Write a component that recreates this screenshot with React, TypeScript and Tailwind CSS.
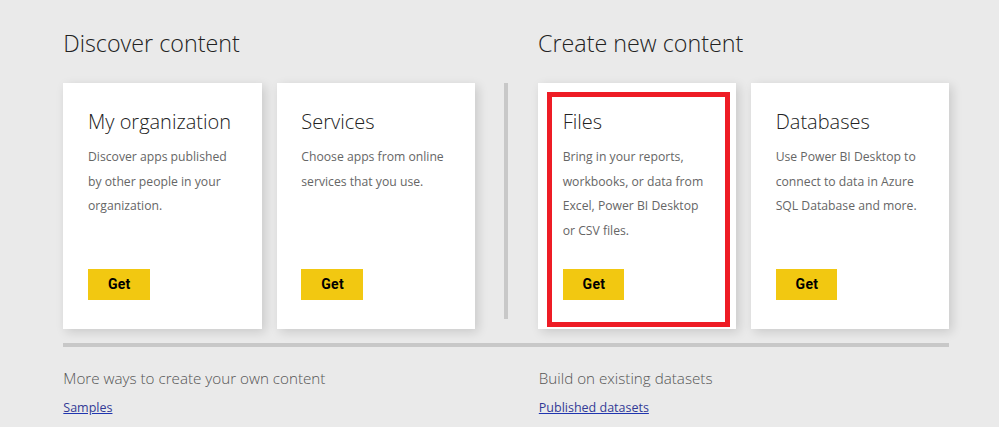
const font = { fontFamily: '"Open Sans", "Noto Sans", sans-serif' };

const Card = ({ title, text, highlighted }: { title: string; text: string[]; highlighted?: boolean }) => (
  <div className="relative w-[198.3px] h-[246px] bg-white shadow-[3px_3px_10px_rgba(0,0,0,0.14)] pl-[24.7px] pt-[25px] flex flex-col">
    <h3 className="text-[20px] leading-[28px] text-[#222] font-light">{title}</h3>
    <div className="mt-[9px] h-[110px] text-[12.2px] leading-[24.5px] text-[#666]">
      {text.map((line) => (
        <div key={line} className="whitespace-nowrap">{line}</div>
      ))}
    </div>
    <button className="mt-[14px] w-[61.6px] h-[31px] pl-[1px] bg-[#f2c811] text-black text-[14px] font-bold tracking-[0.3px] [font-family:Roboto,sans-serif]">
      Get
    </button>
    {highlighted && (
      <div className="absolute left-[9px] top-[9px] w-[183px] h-[235px] border-[5px] border-[#ee1c25]" />
    )}
  </div>
);

export default function App() {
  return (
    <div style={font} className="w-[999px] h-[427px] overflow-hidden bg-[#eaeaea] pl-[63.3px] pr-[50px]">
      <div className="flex pt-[27px]">
        <section className="w-[412px]">
          <h2 className="text-[23.3px] leading-[32px] text-[#222] font-light">Discover content</h2>
          <div className="mt-[24px] flex gap-[15px]">
            <Card
              title="My organization"
              text={['Discover apps published', 'by other people in your', 'organization.']}
            />
            <Card title="Services" text={['Choose apps from online', 'services that you use.']} />
          </div>
        </section>
        <div className="ml-[29px] mt-[56px] w-[4px] h-[236px] bg-[#c8c8c8]" />
        <section className="ml-[29.7px] w-[411px]">
          <h2 className="text-[23.3px] leading-[32px] text-[#222] font-light">Create new content</h2>
          <div className="mt-[24px] flex gap-[15px]">
            <Card
              title="Files"
              text={['Bring in your reports,', 'workbooks, or data from', 'Excel, Power BI Desktop', 'or CSV files.']}
              highlighted
            />
            <Card
              title="Databases"
              text={['Use Power BI Desktop to', 'connect to data in Azure', 'SQL Database and more.']}
            />
          </div>
        </section>
      </div>
      <div className="mt-[14px] h-[4px] bg-[#c8c8c8]" />
      <div className="flex mt-[20px]">
        <div className="w-[475.5px]">
          <p className="text-[15.2px] leading-[22px] text-[#555] font-light">More ways to create your own content</p>
          <a href="#" className="mt-[10px] inline-block text-[12.5px] leading-[18px] text-[#333a96] underline decoration-[#1f35b0]">Samples</a>
        </div>
        <div>
          <p className="text-[15.2px] leading-[22px] text-[#555] font-light">Build on existing datasets</p>
          <a href="#" className="mt-[10px] inline-block text-[12.5px] leading-[18px] text-[#333a96] underline decoration-[#1f35b0]">Published datasets</a>
        </div>
      </div>
    </div>
  );
}
